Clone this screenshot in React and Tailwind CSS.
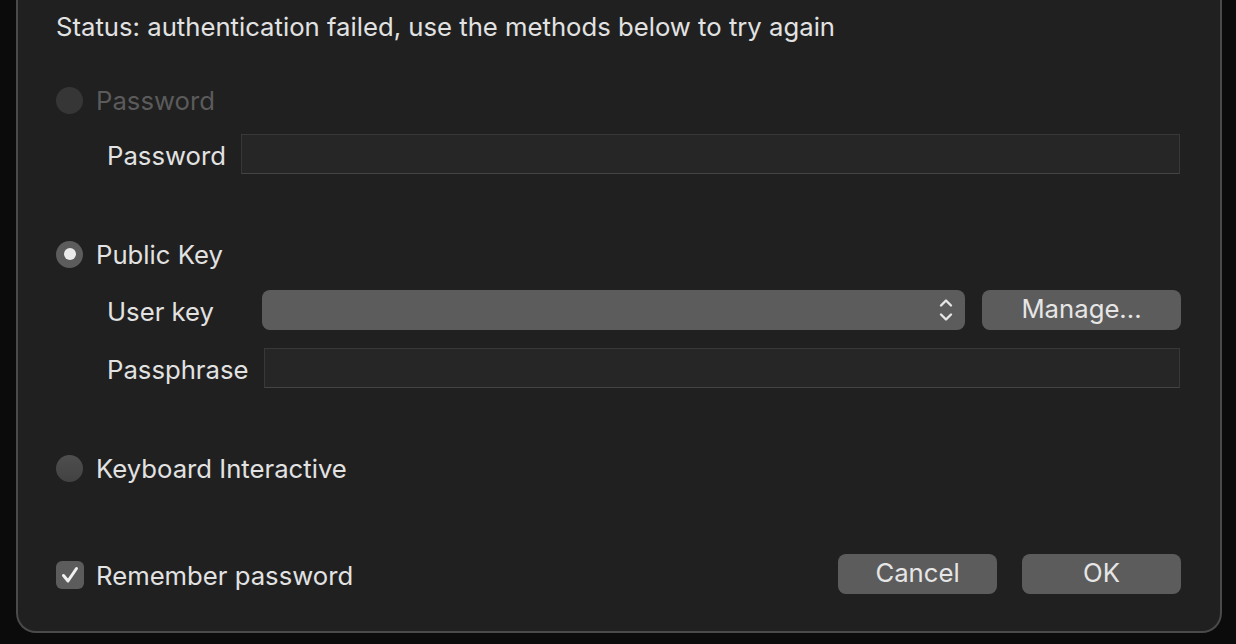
import React from "react";

const font = { fontFamily: "Inter, 'Open Sans', sans-serif" };

function Radio({ state }) {
  if (state === "disabled")
    return <div className="w-[27px] h-[27px] rounded-full bg-[#363636] shrink-0" />;
  if (state === "on")
    return (
      <div className="w-[27px] h-[27px] rounded-full bg-[#5c5c5c] shrink-0 flex items-center justify-center">
        <div className="w-[12px] h-[12px] rounded-full bg-[#ebebeb]" />
      </div>
    );
  return <div className="w-[27px] h-[27px] rounded-full bg-gradient-to-b from-[#4e4e4e] to-[#424242] shrink-0" />;
}

function Chevrons() {
  return (
    <svg width="14" height="26" viewBox="0 0 14 26" fill="none" stroke="#e6e6e6" strokeWidth="2.4" strokeLinecap="round" strokeLinejoin="round">
      <path d="M2 8.5 L7 3.5 L12 8.5" />
      <path d="M2 17.5 L7 22.5 L12 17.5" />
    </svg>
  );
}

export default function App() {
  return (
    <div className="w-[1236px] h-[644px] bg-[#0b0b0b] overflow-hidden" style={font}>
      <div className="ml-[16px] w-[1206px] h-[633px] bg-[#202020] border-x-2 border-b-2 border-[#4a4a4a] rounded-b-[20px] pl-[38px] pr-[40px] text-[25.7px] text-[#e2e2e2] flex flex-col">
        <div className="h-[54px] flex items-center pt-[1px]">Status: authentication failed, use the methods below to try again</div>

        <div className="mt-[26px] h-[40px] flex items-center gap-[13px]">
          <Radio state="disabled" />
          <span className="text-[#5b5b5b] pt-[2px]">Password</span>
        </div>

        <div className="mt-[14px] h-[40px] flex items-center pl-[51px]">
          <span className="w-[134px] shrink-0 pt-[5px]">Password</span>
          <div className="flex-1 h-[40px] bg-[#262626] border border-[#383838] border-b-[#444444]" />
        </div>

        <div className="mt-[60px] h-[40px] flex items-center gap-[13px]">
          <Radio state="on" />
          <span className="pt-[2px]">Public Key</span>
        </div>

        <div className="mt-[16px] h-[40px] flex items-center pl-[51px] mr-[-1px]">
          <span className="w-[155px] shrink-0 pt-[4px]">User key</span>
          <div className="w-[703px] shrink-0 h-[40px] rounded-[8px] bg-[#5c5c5c] flex items-center justify-end pr-[12px]">
            <Chevrons />
          </div>
          <div className="ml-[17px] w-[199px] shrink-0 h-[40px] rounded-[8px] bg-[#5c5c5c] flex items-center justify-center text-[#e6e6e6] pb-[2px]">Manage...</div>
        </div>

        <div className="mt-[18px] h-[40px] flex items-center pl-[51px]">
          <span className="w-[157px] shrink-0 pt-[4px]">Passphrase</span>
          <div className="flex-1 h-[40px] bg-[#262626] border border-[#383838] border-b-[#444444]" />
        </div>

        <div className="mt-[60px] h-[40px] flex items-center gap-[13px]">
          <Radio state="off" />
          <span className="pt-[2px]">Keyboard Interactive</span>
        </div>

        <div className="mt-[66px] h-[40px] flex items-center mr-[-1px]">
          <div className="w-[28px] h-[28px] rounded-[6px] bg-[#5c5c5c] flex items-center justify-center shrink-0 mt-[2px]">
            <svg width="20" height="20" viewBox="0 0 20 20" fill="none" stroke="#f0f0f0" strokeWidth="3" strokeLinecap="round" strokeLinejoin="round">
              <path d="M3.5 10.5 L8 16 L16.5 3.5" />
            </svg>
          </div>
          <span className="ml-[12px] pt-[4px]">Remember password</span>
          <div className="ml-auto flex gap-[25px]">
            <div className="w-[159px] h-[40px] rounded-[8px] bg-[#5c5c5c] flex items-center justify-center text-[#e6e6e6] pb-[2px]">Cancel</div>
            <div className="w-[159px] h-[40px] rounded-[8px] bg-[#5c5c5c] flex items-center justify-center text-[#e6e6e6] pb-[2px]">OK</div>
          </div>
        </div>
      </div>
    </div>
  );
}
